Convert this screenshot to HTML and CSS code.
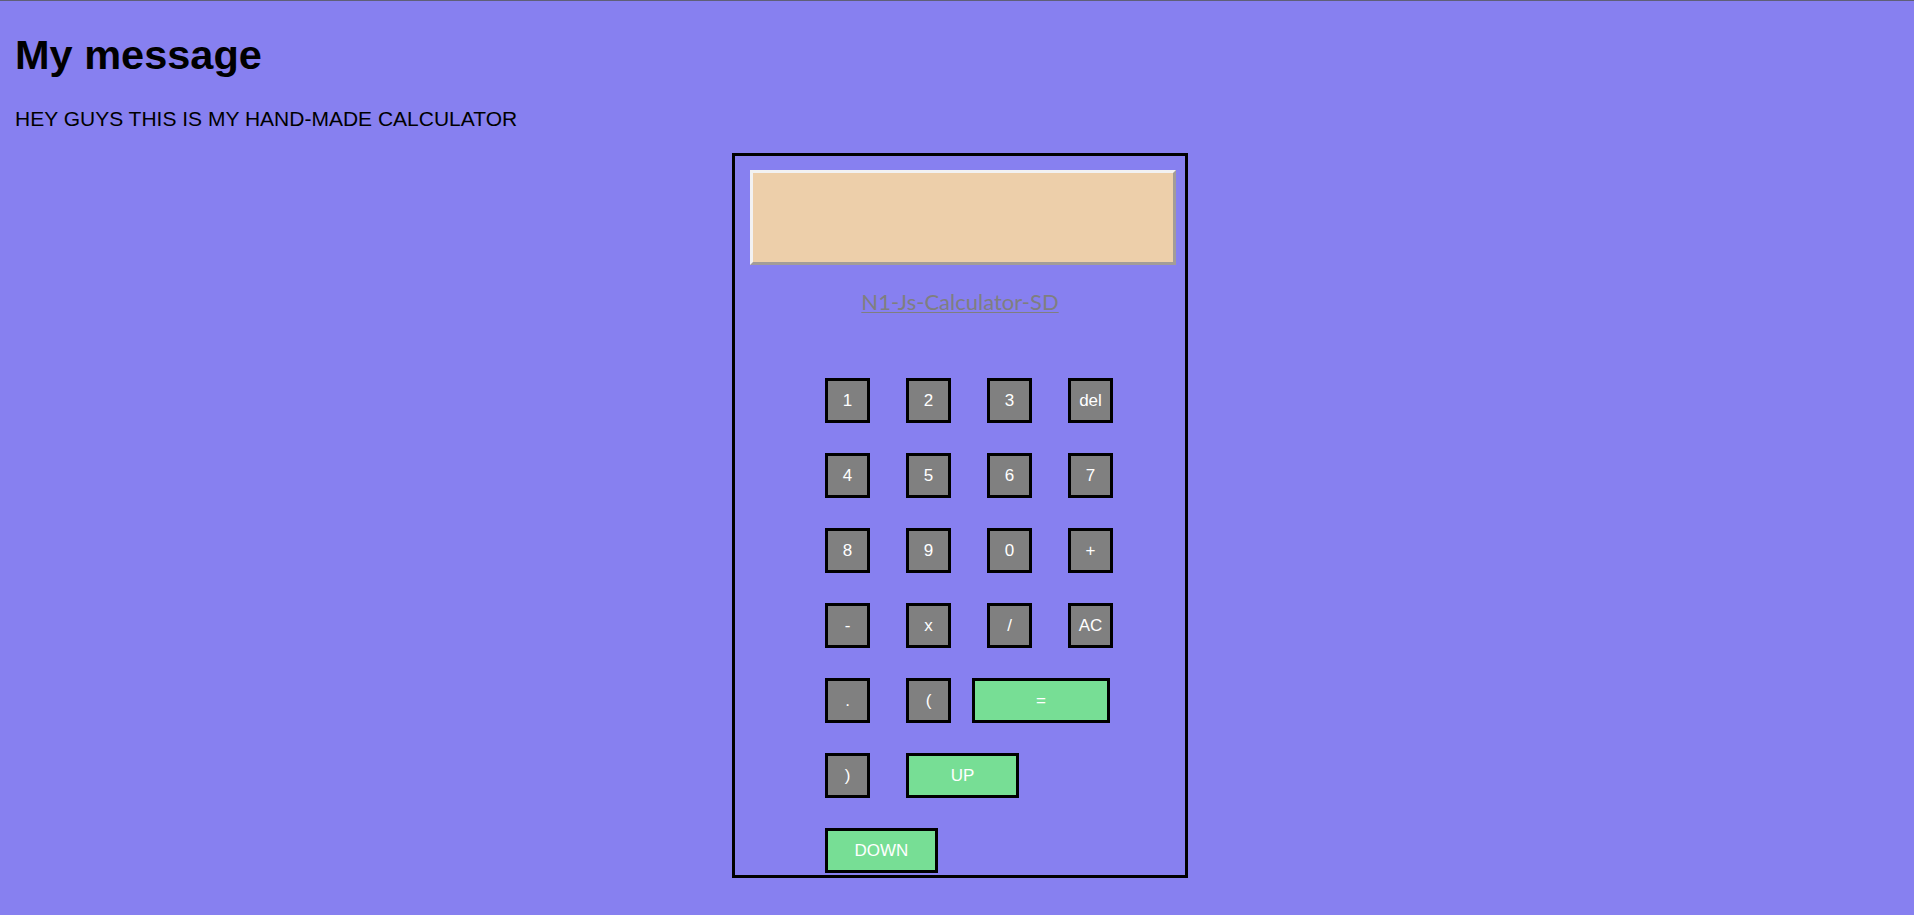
FILE: index.html
```html
<!DOCTYPE html>
<html lang="en">
<head>
<meta charset="utf-8">
<title>My message</title>
<link rel="stylesheet" href="styles.css">
</head>
<body>
<h1 class="heading">My message</h1>
<p class="intro">HEY GUYS THIS IS MY HAND-MADE CALCULATOR</p>
<div class="calculator">
  <input class="display" type="text" readonly>
  <div class="title-row"><a class="title" href="#">N1-Js-Calculator-SD</a></div>
  <div class="keys">
    <div class="row">
      <button class="key">1</button><button class="key">2</button><button class="key">3</button><button class="key">del</button>
    </div>
    <div class="row">
      <button class="key">4</button><button class="key">5</button><button class="key">6</button><button class="key">7</button>
    </div>
    <div class="row">
      <button class="key">8</button><button class="key">9</button><button class="key">0</button><button class="key">+</button>
    </div>
    <div class="row">
      <button class="key">-</button><button class="key">x</button><button class="key">/</button><button class="key">AC</button>
    </div>
    <div class="row">
      <button class="key">.</button><button class="key">(</button><button class="key key-equals">=</button>
    </div>
    <div class="row">
      <button class="key">)</button><button class="key key-wide">UP</button>
    </div>
    <div class="row">
      <button class="key key-wide">DOWN</button>
    </div>
  </div>
</div>
</body>
</html>
```
FILE: styles.css
```css
html {
  background: #8780f0;
}
body {
  margin: 0;
  padding: 0 15px;
  border-top: 1px solid #5f5f77;
  background: #8780f0;
  font-family: "Liberation Sans", Arial, sans-serif;
  color: #000;
}
.heading {
  margin: 31px 0 0;
  font-size: 41.5px;
  line-height: 46px;
  font-weight: bold;
}
.intro {
  margin: 29px 0 0;
  font-size: 21px;
  line-height: 23px;
}
.calculator {
  box-sizing: border-box;
  width: 456px;
  height: 725px;
  margin: 23px 0 0 717px;
  border: 3px solid #000;
  padding: 14px 0 0 15px;
}
.display {
  display: block;
  box-sizing: border-box;
  width: 426px;
  height: 95px;
  margin: 0;
  padding: 0;
  background: #edcfaa;
  border: 3px solid;
  border-color: #f2f2f2 #a39c98 #a39c98 #f2f2f2;
  outline: none;
}
.title-row {
  margin: 24px 15px 0 0;
  text-align: center;
  font-family: Lato, "Open Sans", sans-serif;
  font-size: 22px;
  line-height: 26px;
}
.title {
  color: #7f7f7f;
  text-decoration: underline;
  text-decoration-thickness: 1px;
  text-underline-offset: 2px;
}
.keys {
  display: flex;
  flex-direction: column;
  gap: 30px;
  margin-top: 63px;
  padding-left: 75px;
}
.row {
  display: flex;
  gap: 36px;
}
.key {
  box-sizing: border-box;
  width: 45px;
  height: 45px;
  margin: 0;
  padding: 0;
  border: 3px solid #000;
  background: #808080;
  color: #fff;
  font-family: "Liberation Sans", Arial, sans-serif;
  font-size: 17px;
  line-height: 1;
}
.key-equals {
  width: 138px;
  margin-left: -15px;
  background: #77de95;
}
.key-wide {
  width: 113px;
  background: #77de95;
}
```
